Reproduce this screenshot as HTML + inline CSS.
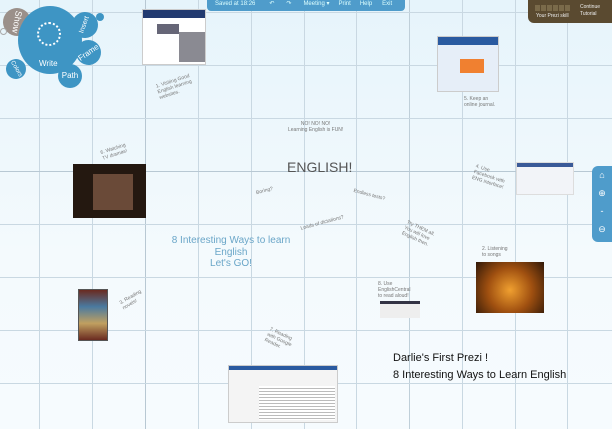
<!DOCTYPE html>
<html><head><meta charset="utf-8"><style>
*{margin:0;padding:0;box-sizing:border-box}
body{width:612px;height:429px;overflow:hidden;position:relative;font-family:"Liberation Sans",sans-serif;
background:linear-gradient(#e6f4fb,#f4fafd 60%,#f6fbfe);}
.v{position:absolute;top:0;bottom:0;width:1px;background:#c9d8e2}
.h{position:absolute;left:0;right:0;height:1px;background:#c9d8e2}
.t{position:absolute;font-size:5px;color:#777;line-height:6px;white-space:nowrap}
.img{position:absolute}
.c{position:absolute;border-radius:50%;background:#3e95c4;color:#fff;text-align:center;font-size:9px}
</style></head><body>
<div class="v" style="left:39px"></div><div class="v" style="left:92px"></div><div class="v" style="left:145px;background:#b8c8d3"></div>
<div class="v" style="left:198px"></div><div class="v" style="left:251px"></div><div class="v" style="left:304px"></div>
<div class="v" style="left:356px"></div><div class="v" style="left:409px;background:#bfcfd9"></div><div class="v" style="left:462px"></div>
<div class="v" style="left:515px"></div><div class="v" style="left:567px"></div>
<div class="h" style="top:12px"></div><div class="h" style="top:65px"></div><div class="h" style="top:118px"></div>
<div class="h" style="top:171px;background:#b8c8d3"></div><div class="h" style="top:224px"></div><div class="h" style="top:277px"></div>
<div class="h" style="top:330px"></div><div class="h" style="top:383px"></div>

<!-- bubble menu -->
<div class="c" style="left:3px;top:8px;width:28px;height:28px;background:#9b908a;transform:rotate(100deg);line-height:28px">Show</div>
<div class="c" style="left:18px;top:6px;width:64px;height:68px"></div>
<div class="c" style="left:37px;top:22px;width:24px;height:24px;background:none;border:2px dotted #fff"></div>
<div class="t" style="left:39px;top:61px;color:#fff;font-size:8px">Write</div>
<div class="c" style="left:72px;top:12px;width:26px;height:26px;line-height:26px;font-size:7px;transform:rotate(-70deg)">Insert</div>
<div class="c" style="left:96px;top:13px;width:8px;height:8px"></div>
<div class="c" style="left:76px;top:40px;width:25px;height:25px;line-height:25px;font-size:8px;transform:rotate(-35deg)">Frame</div>
<div class="c" style="left:58px;top:64px;width:24px;height:24px;line-height:24px;font-size:8px">Path</div>
<div class="c" style="left:6px;top:59px;width:20px;height:20px;line-height:20px;font-size:6px;transform:rotate(60deg)">Colors</div>
<div class="c" style="left:0;top:28px;width:7px;height:7px;background:none;border:1px solid #aaa"></div>

<!-- top bar -->
<div style="position:absolute;left:207px;top:0;width:198px;height:11px;background:#4f9ccb;border-radius:0 0 4px 4px;color:#dff;font-size:6px;line-height:9px;white-space:nowrap">
<span style="margin-left:8px">Saved at 18:26</span><span style="margin-left:14px">↶</span><span style="margin-left:12px">↷</span><span style="margin-left:12px">Meeting ▾</span><span style="margin-left:9px">Print</span><span style="margin-left:9px">Help</span><span style="margin-left:10px">Exit</span></div>
<div style="position:absolute;left:528px;top:0;width:84px;height:23px;background:#5a4a30;border-radius:0 0 0 6px;color:#eee;font-size:5px">
<div style="position:absolute;left:7px;top:5px;width:36px;height:6px;background:repeating-linear-gradient(90deg,#7a6a4a 0 5px,#5a4a30 5px 6px)"></div>
<div style="position:absolute;left:8px;top:13px">Your Prezi skill</div>
<div style="position:absolute;left:52px;top:4px;line-height:7px">Continue<br>Tutorial</div></div>

<!-- right zoom -->
<div style="position:absolute;left:592px;top:166px;width:20px;height:76px;background:#4f9ccb;border-radius:6px 0 0 6px;color:#fff;font-size:9px;text-align:center;line-height:18px">⌂<br>⊕<br>-<br>⊖</div>

<!-- images -->
<div class="img" style="left:142px;top:9px;width:64px;height:56px;background:linear-gradient(#223a70 0 8px,#fff 8px);border:1px solid #ccc"><div style="position:absolute;left:36px;top:22px;width:26px;height:30px;background:#8a8a92"></div><div style="position:absolute;left:14px;top:14px;width:22px;height:10px;background:#667"></div></div>
<div class="img" style="left:437px;top:36px;width:62px;height:56px;background:linear-gradient(#2a5aa0 0 8px,#e6eef8 8px);border:1px solid #ccc"><div style="position:absolute;left:22px;top:22px;width:24px;height:14px;background:#f08030"></div></div>
<div class="img" style="left:73px;top:164px;width:73px;height:54px;background:#241810"><div style="position:absolute;left:20px;top:10px;width:40px;height:36px;background:#6a4a38"></div></div>
<div class="img" style="left:516px;top:162px;width:58px;height:33px;background:linear-gradient(#3a5a98 0 4px,#f2f4f8 4px);border:1px solid #ddd"></div>
<div class="img" style="left:476px;top:262px;width:68px;height:51px;background:radial-gradient(circle at 50% 55%,#f0a030,#a05010 50%,#301808)"></div>
<div class="img" style="left:78px;top:289px;width:30px;height:52px;background:linear-gradient(#6a2a20,#4a7aa0,#c0a060,#6a2a20);border:1px solid #555"></div>
<div class="img" style="left:380px;top:301px;width:40px;height:17px;background:linear-gradient(#334 0 3px,#eee 3px)"></div>
<div class="img" style="left:228px;top:365px;width:110px;height:58px;background:linear-gradient(#2a5aa0 0 4px,#f4f4f4 4px);border:1px solid #ccc"><div style="position:absolute;left:30px;top:20px;width:76px;height:34px;background:repeating-linear-gradient(#fff 0 2px,#bbb 2px 3px)"></div></div>

<!-- texts -->
<div class="t" style="left:157px;top:78px;transform:rotate(-18deg)">1. Visiting Good<br>English learning<br>websites.</div>
<div class="t" style="left:464px;top:96px">5. Keep an<br>online journal.</div>
<div class="t" style="left:288px;top:121px;text-align:center">NO! NO! NO!<br>Learning English is FUN!</div>
<div class="t" style="left:101px;top:146px;transform:rotate(-18deg)">6. Watching<br>TV dramas!</div>
<div class="t" style="left:287px;top:159px;font-size:14px;line-height:16px;color:#555">ENGLISH!</div>
<div class="t" style="left:473px;top:168px;transform:rotate(18deg)">4. Use<br>Facebook with<br>ENG interface!</div>
<div class="t" style="left:256px;top:188px;transform:rotate(-15deg)">Boring?</div>
<div class="t" style="left:353px;top:192px;transform:rotate(15deg)">Endless tests?</div>
<div class="t" style="left:300px;top:220px;transform:rotate(-15deg)">Loads of dictations?</div>
<div class="t" style="left:403px;top:225px;transform:rotate(25deg)">Try THEM all.<br>You will love<br>English then.</div>
<div class="t" style="left:169px;top:235px;font-size:10px;line-height:11.5px;color:#6aa6c8;text-align:center;width:124px">8 Interesting Ways to learn<br>English<br>Let's GO!</div>
<div class="t" style="left:482px;top:246px">2. Listening<br>to songs</div>
<div class="t" style="left:378px;top:281px">8. Use<br>EnglishCentral<br>to read aloud!</div>
<div class="t" style="left:120px;top:294px;transform:rotate(-30deg)">3. Reading<br>novels!</div>
<div class="t" style="left:266px;top:331px;transform:rotate(25deg)">7. Reading<br>with Google<br>Reader.</div>
<div class="t" style="left:393px;top:350px;font-size:11px;line-height:17px;color:#111">Darlie's First Prezi !<br>8 Interesting Ways to Learn English</div>
</body></html>
